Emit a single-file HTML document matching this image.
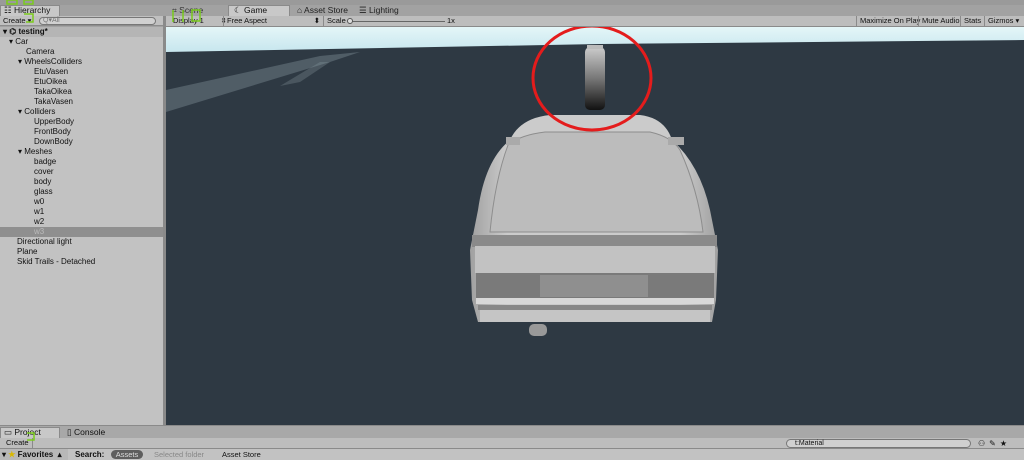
<!DOCTYPE html>
<html><head><meta charset="utf-8"><style>
*{margin:0;padding:0;box-sizing:border-box}
body{width:1024px;height:460px;overflow:hidden;background:#a2a2a2;font-family:"Liberation Sans",sans-serif;font-size:8px;color:#111;position:relative}
.a{position:absolute}
.row{position:absolute;left:0;width:163px;height:10px;line-height:10px;white-space:nowrap}
.tab{position:absolute;height:11px;line-height:11px;font-size:8.5px}
.btn{position:absolute;height:10px;line-height:10px;font-size:7.5px;border-left:1px solid #8a8a8a;padding:0 3px;color:#111}
</style></head><body>
<div class="a" style="left:0;top:0;width:1024px;height:5px;background:#9a9a9a"></div>
<div class="a" style="left:0;top:5px;width:60px;height:11px;background:#c8c8c8;border:1px solid #8a8a8a;border-bottom:none"></div>
<div class="tab" style="left:4px;top:5px">☷ Hierarchy</div>
<div class="a" style="left:0;top:16px;width:163px;height:10px;background:#c0c0c0;border-bottom:1px solid #8d8d8d"></div>
<div class="a" style="left:3px;top:16px;line-height:10px;font-size:7.5px">Create ▾</div>
<div class="a" style="left:39px;top:17px;width:117px;height:8px;border:1px solid #777;border-radius:5px;background:#d0d0d0;font-size:7px;line-height:6px;padding-left:3px;color:#777">Q▾All</div>
<div class="a" style="left:0;top:27px;width:163px;height:398px;background:#c2c2c2"></div>
<div class="a" style="left:163px;top:16px;width:3px;height:410px;background:#8a8a8a"></div>
<div class="row" style="top:227px;background:#8f8f8f"></div>
<div class="row" style="top:27px;background:#b5b5b5;font-weight:bold;padding-left:3px">▾ ⌬ testing*</div>
<div class="row" style="top:37px;padding-left:9px">▾ Car</div>
<div class="row" style="top:47px;padding-left:26px">Camera</div>
<div class="row" style="top:57px;padding-left:18px">▾ WheelsColliders</div>
<div class="row" style="top:67px;padding-left:34px">EtuVasen</div>
<div class="row" style="top:77px;padding-left:34px">EtuOikea</div>
<div class="row" style="top:87px;padding-left:34px">TakaOikea</div>
<div class="row" style="top:97px;padding-left:34px">TakaVasen</div>
<div class="row" style="top:107px;padding-left:18px">▾ Colliders</div>
<div class="row" style="top:117px;padding-left:34px">UpperBody</div>
<div class="row" style="top:127px;padding-left:34px">FrontBody</div>
<div class="row" style="top:137px;padding-left:34px">DownBody</div>
<div class="row" style="top:147px;padding-left:18px">▾ Meshes</div>
<div class="row" style="top:157px;padding-left:34px">badge</div>
<div class="row" style="top:167px;padding-left:34px">cover</div>
<div class="row" style="top:177px;padding-left:34px">body</div>
<div class="row" style="top:187px;padding-left:34px">glass</div>
<div class="row" style="top:197px;padding-left:34px">w0</div>
<div class="row" style="top:207px;padding-left:34px">w1</div>
<div class="row" style="top:217px;padding-left:34px">w2</div>
<div class="row" style="top:227px;padding-left:34px;color:#bbb">w3</div>
<div class="row" style="top:237px;padding-left:17px">Directional light</div>
<div class="row" style="top:247px;padding-left:17px">Plane</div>
<div class="row" style="top:257px;padding-left:17px">Skid Trails - Detached</div>
<div class="tab" style="left:172px;top:5px;color:#333">⌗ Scene</div>
<div class="a" style="left:228px;top:5px;width:62px;height:11px;background:#c8c8c8;border:1px solid #8a8a8a;border-bottom:none"></div>
<div class="tab" style="left:234px;top:5px">☾ Game</div>
<div class="tab" style="left:297px;top:5px;color:#222">⌂ Asset Store</div>
<div class="tab" style="left:359px;top:5px;color:#222">☰ Lighting</div>
<div class="a" style="left:166px;top:16px;width:858px;height:11px;background:#bdbdbd;border-bottom:1px solid #8a8a8a"></div>
<div class="btn" style="left:170px;top:16px;border:none">Display 1 &nbsp;&nbsp;&nbsp;&nbsp;&nbsp;&nbsp; ⬍</div>
<div class="btn" style="left:223px;top:16px;width:100px">Free Aspect<span style="float:right">⬍</span></div>
<div class="btn" style="left:323px;top:16px">Scale</div>
<div class="a" style="left:350px;top:21px;width:95px;height:1px;background:#666"></div>
<div class="a" style="left:347px;top:18px;width:6px;height:6px;border-radius:50%;border:1px solid #555;background:#ddd"></div>
<div class="btn" style="left:444px;top:16px;border:none">1x</div>
<div class="btn" style="left:856px;top:16px">Maximize On Play</div>
<div class="btn" style="left:918px;top:16px">Mute Audio</div>
<div class="btn" style="left:960px;top:16px">Stats</div>
<div class="btn" style="left:984px;top:16px">Gizmos ▾</div>
<svg class="a" style="left:166px;top:27px" width="858" height="398" viewBox="166 27 858 398">
<defs>
<linearGradient id="sky" x1="0" y1="0" x2="0" y2="1"><stop offset="0" stop-color="#e4f6f8"/><stop offset="1" stop-color="#c7e6ee"/></linearGradient>
<linearGradient id="whl" x1="0" y1="0" x2="0" y2="1"><stop offset="0" stop-color="#ccc"/><stop offset="0.5" stop-color="#777"/><stop offset="1" stop-color="#111"/></linearGradient>
<linearGradient id="body" x1="0" y1="0" x2="1" y2="0"><stop offset="0" stop-color="#a0a0a0"/><stop offset="0.15" stop-color="#cbcbcb"/><stop offset="0.85" stop-color="#cbcbcb"/><stop offset="1" stop-color="#a0a0a0"/></linearGradient>
</defs>
<rect x="166" y="27" width="858" height="398" fill="#2e3943"/>
<polygon points="166,27 1024,27 1024,40 600,44 166,52" fill="url(#sky)"/>
<polygon points="166,90 166,112 330,62 360,52 320,56" fill="#7a8a93" opacity="0.45"/>
<polygon points="280,86 300,82 330,62 320,62" fill="#8a9aa3" opacity="0.3"/>
<rect x="585" y="47" width="20" height="63" rx="5" fill="url(#whl)"/>
<rect x="587" y="45" width="16" height="4" fill="#bbb"/>
<path d="M478,210 Q485,160 510,140 Q520,118 550,115 L640,115 Q665,118 672,140 Q700,165 710,210 L718,250 L716,300 L712,322 L478,322 L472,300 L470,250 Z" fill="url(#body)"/>
<path d="M508,145 Q520,135 545,132 L650,132 Q672,137 680,150 Q698,190 703,232 L490,232 Q495,180 508,145Z" fill="#bcbcbc" stroke="#8d8d8d" stroke-width="1"/>
<rect x="472" y="235" width="245" height="12" fill="#8a8a8a"/>
<rect x="475" y="246" width="240" height="27" fill="#c2c2c2"/>
<rect x="476" y="273" width="238" height="25" fill="#7a7a7a"/>
<rect x="540" y="275" width="108" height="22" fill="#8f8f8f"/>
<rect x="476" y="298" width="238" height="6" fill="#d8d8d8"/>
<rect x="478" y="305" width="234" height="5" fill="#888"/>
<rect x="480" y="310" width="230" height="12" fill="#c5c5c5"/>
<rect x="529" y="324" width="18" height="12" rx="5" fill="#999"/>
<rect x="506" y="137" width="14" height="8" fill="#aaa"/>
<rect x="668" y="137" width="16" height="8" fill="#aaa"/>
<ellipse cx="592" cy="78" rx="59" ry="52" fill="none" stroke="#e41c1c" stroke-width="3"/>
</svg>
<div class="a" style="left:0;top:425px;width:1024px;height:35px;background:#a8a8a8;border-top:1px solid #8a8a8a"></div>
<div class="a" style="left:0;top:427px;width:60px;height:11px;background:#c8c8c8;border:1px solid #8a8a8a;border-bottom:none"></div>
<div class="tab" style="left:4px;top:427px">▭ Project</div>
<div class="tab" style="left:67px;top:427px">▯ Console</div>
<div class="a" style="left:0;top:438px;width:1024px;height:11px;background:#bdbdbd;border-bottom:1px solid #8a8a8a"></div>
<div class="btn" style="left:3px;top:438px;border:none;border-right:1px solid #8a8a8a">Create</div>
<div class="a" style="left:786px;top:439px;width:185px;height:9px;border:1px solid #777;border-radius:5px;background:#d0d0d0;font-size:7px;line-height:7px;padding-left:8px">t:Material</div>
<div class="a" style="left:978px;top:438px;font-size:8px;line-height:11px;letter-spacing:4px">⚇✎★</div>
<div class="a" style="left:0;top:449px;width:1024px;height:11px;background:#c2c2c2"></div>
<div class="a" style="left:0;top:449px;width:68px;height:11px;background:#b8b8b8"></div>
<div class="a" style="left:2px;top:449px;font-weight:bold;line-height:11px;font-size:8px">▾ <span style="color:#d9b800">★</span> Favorites &nbsp;▴</div>
<div class="a" style="left:75px;top:449px;font-weight:bold;line-height:11px;font-size:8px">Search:</div>
<div class="a" style="left:111px;top:450px;width:32px;height:9px;background:#5e5e5e;border-radius:5px;color:#ddd;font-size:7.5px;line-height:9px;text-align:center">Assets</div>
<div class="a" style="left:154px;top:449px;color:#888;line-height:11px;font-size:7.5px">Selected folder</div>
<div class="a" style="left:222px;top:449px;line-height:11px;font-size:7.5px">Asset Store</div>
<svg class="a" style="left:0;top:0" width="1024" height="460">
<g fill="none" stroke="#7acb1c" stroke-width="1.5">
<rect x="7" y="0" width="10" height="4"/><rect x="24" y="0" width="9" height="4"/>
<path d="M24,14 H33 V22 H26"/>
<path d="M173,10 V22 M183,10 V22"/><rect x="192" y="10" width="8" height="11"/>
<path d="M27,433 H34 V440 H27"/>
</g></svg>
</body></html>
